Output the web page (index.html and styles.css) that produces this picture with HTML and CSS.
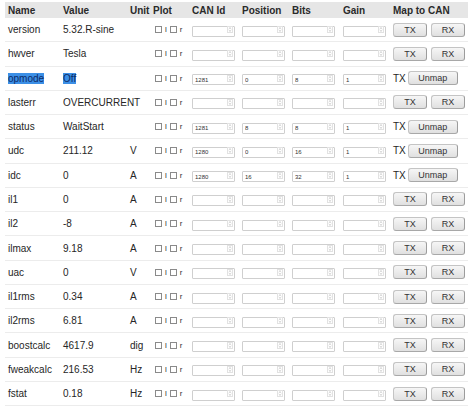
FILE: index.html
```html
<!DOCTYPE html>
<html>
<head>
<meta charset="utf-8">
<link rel="stylesheet" href="styles.css">
</head>
<body>
<div class="params">
  <div class="row head">
    <div class="c">Name</div><div class="c">Value</div><div class="c">Unit</div><div class="c">Plot</div><div class="c">CAN Id</div><div class="c">Position</div><div class="c">Bits</div><div class="c">Gain</div><div class="c">Map to CAN</div>
  </div>
  <div id="rows"></div>
</div>
<script src="app.js"></script>
</body>
</html>
```

FILE: app.js
```js
var data = [
  ["version","5.32.R-sine","",null],
  ["hwver","Tesla","",null],
  ["opmode","Off","",["1281","0","8","1"],true],
  ["lasterr","OVERCURRENT","",null],
  ["status","WaitStart","",["1281","8","8","1"]],
  ["udc","211.12","V",["1280","0","16","1"]],
  ["idc","0","A",["1280","16","32","1"]],
  ["il1","0","A",null],
  ["il2","-8","A",null],
  ["ilmax","9.18","A",null],
  ["uac","0","V",null],
  ["il1rms","0.34","A",null],
  ["il2rms","6.81","A",null],
  ["boostcalc","4617.9","dig",null],
  ["fweakcalc","216.53","Hz",null],
  ["fstat","0.18","Hz",null]
];
var spin = '<span class="spin"><svg width="5" height="7" viewBox="0 0 5 7"><path d="M1 2.6 L2.5 1.2 L4 2.6 M1 4.4 L2.5 5.8 L4 4.4" fill="none" stroke="#a8a8a8" stroke-width="0.8"/></svg></span>';
function num(v){ return '<span class="num"><input class="inp" type="text" value="'+v+'">'+spin+'</span>'; }
var html = "";
data.forEach(function(d){
  var can = d[3] || ["","","",""];
  var sel = d[4];
  html += '<div class="row">' +
    '<div class="c">' + (sel ? '<span class="sel">'+d[0]+'</span>' : d[0]) + '</div>' +
    '<div class="c">' + (sel ? '<span class="sel">'+d[1]+'</span>' : d[1]) + '</div>' +
    '<div class="c">' + d[2] + '</div>' +
    '<div class="c plot"><input type="checkbox" class="cb"><span class="lbl">l</span><input type="checkbox" class="cb"><span class="lbl">r</span></div>' +
    '<div class="c">' + num(can[0]) + '</div>' +
    '<div class="c">' + num(can[1]) + '</div>' +
    '<div class="c">' + num(can[2]) + '</div>' +
    '<div class="c">' + num(can[3]) + '</div>' +
    '<div class="c map">' + (d[3] ? '<span class="dir">TX</span><button class="btn wide">Unmap</button>' : '<button class="btn">TX</button><button class="btn">RX</button>') + '</div>' +
    '</div>';
});
document.getElementById("rows").innerHTML = html;
```

FILE: styles.css
```css
html, body {
  margin: 0;
  background: #fff;
}
body {
  padding: 2px 0 0 5px;
  font-family: "Liberation Sans", Arial, sans-serif;
  font-size: 10px;
  color: #262626;
}
.params {
  width: 463px;
}
.row {
  display: grid;
  grid-template-columns: 55px 67px 23px 39px 50px 50px 51px 50px 78px;
  align-items: center;
  height: 24.27px;
  box-sizing: border-box;
  border-bottom: 1px solid #ececec;
}
.row.head {
  height: 16px;
  background: #e6e6e6;
  border-bottom: none;
  font-weight: bold;
  color: #2a2a2a;
}
.c {
  padding-left: 3px;
  white-space: nowrap;
  display: flex;
  align-items: center;
}
.sel {
  background: #3b8fe6;
  color: #0c2a66;
}
.plot {
  padding-left: 5px;
}
.cb {
  -webkit-appearance: none;
  appearance: none;
  width: 7px;
  height: 7px;
  margin: 0;
  border: 1px solid #8a8a8a;
  box-sizing: border-box;
  background: #fff;
}
.lbl {
  font-size: 8px;
  margin: 0 3px 0 3px;
  color: #333;
}
.num {
  position: relative;
  display: inline-block;
  width: 43px;
  height: 11px;
}
.inp {
  box-sizing: border-box;
  width: 43px;
  height: 11px;
  margin: 0;
  padding: 0 0 0 2px;
  border: 1px solid #cfcfcf;
  border-radius: 1px;
  font-family: "Liberation Sans", Arial, sans-serif;
  font-size: 6px;
  color: #333;
  background: #fff;
  outline: none;
}
.spin {
  position: absolute;
  right: 2px;
  top: 2px;
  width: 6px;
  height: 7px;
  border: 0.5px solid #e2e2e2;
  box-sizing: border-box;
  display: flex;
  align-items: center;
  justify-content: center;
}
.spin svg {
  display: block;
}
.map {
  gap: 4px;
}
.dir {
  font-size: 10px;
  color: #262626;
  margin-right: -2px;
}
.btn {
  width: 34px;
  height: 14px;
  margin: 0;
  padding: 0;
  box-sizing: border-box;
  border: 1px solid #c4c4c4;
  border-right-color: #9c9c9c;
  border-bottom-color: #a8a8a8;
  border-radius: 3px;
  background: linear-gradient(#f6f6f6, #e0e0e0);
  font-family: "Liberation Sans", Arial, sans-serif;
  font-size: 9px;
  color: #333;
}
.btn.wide {
  width: 50px;
}
```
